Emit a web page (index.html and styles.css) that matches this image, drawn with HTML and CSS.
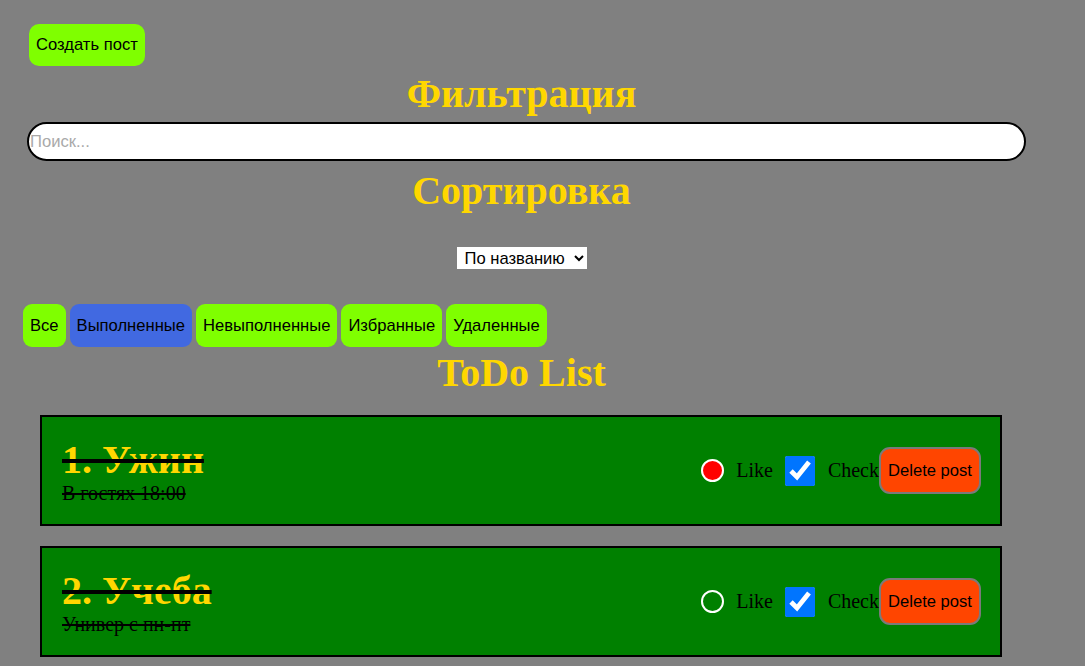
FILE: index.html
```html
<!DOCTYPE html>
<html lang="ru">
<head>
<meta charset="utf-8">
<title>ToDo</title>
<link rel="stylesheet" href="styles.css">
</head>
<body>
<div class="app">
  <button class="create">Создать пост</button>
  <h1 class="title">Фильтрация</h1>
  <input class="search" type="text" placeholder="Поиск...">
  <h1 class="title title-sort">Сортировка</h1>
  <div class="sort">
    <select class="sort-select">
      <option>По названию</option>
      <option>По описанию</option>
    </select>
  </div>
  <div class="filters">
    <button class="filter">Все</button>
    <button class="filter active">Выполненные</button>
    <button class="filter">Невыполненные</button>
    <button class="filter">Избранные</button>
    <button class="filter">Удаленные</button>
  </div>
  <h1 class="title title-list">ToDo List</h1>
  <div class="list">
    <div class="post">
      <div class="post-text">
        <h2 class="post-title">1. Ужин</h2>
        <div class="post-desc">В гостях 18:00</div>
      </div>
      <div class="post-actions">
        <input class="like" type="radio" checked>
        <span class="label like-label">Like</span>
        <input class="check" type="checkbox" checked>
        <span class="label check-label">Check</span>
        <button class="delete">Delete post</button>
      </div>
    </div>
    <div class="post">
      <div class="post-text">
        <h2 class="post-title">2. Учеба</h2>
        <div class="post-desc">Универ с пн-пт</div>
      </div>
      <div class="post-actions">
        <input class="like" type="radio">
        <span class="label like-label">Like</span>
        <input class="check" type="checkbox" checked>
        <span class="label check-label">Check</span>
        <button class="delete">Delete post</button>
      </div>
    </div>
  </div>
</div>
</body>
</html>
```
FILE: styles.css
```css
body {
  margin: 0;
  background: #808080;
  font-family: "Liberation Serif", "Times New Roman", serif;
}

.app {
  width: 1001px;
  margin-left: 21px;
  padding-top: 24px;
}

.create {
  display: block;
  margin-left: 8px;
  height: 42px;
  padding: 0 7px;
  border: none;
  border-radius: 10px;
  background: #7fff00;
  color: #000;
  font-family: "Liberation Sans", Arial, sans-serif;
  font-size: 16.6px;
}

.title {
  margin: 5px 0 0;
  text-align: center;
  color: #ffd700;
  font-family: "Liberation Serif", "Times New Roman", serif;
  font-weight: bold;
  font-size: 40px;
  line-height: 45px;
}

.search {
  display: block;
  box-sizing: border-box;
  margin: 6px 0 0 6px;
  width: 999px;
  height: 39px;
  padding: 0 1px;
  border: 2px solid #000;
  border-radius: 20px;
  background: #fff;
  font-family: "Liberation Sans", Arial, sans-serif;
  font-size: 16.6px;
  outline: none;
}

.search::placeholder {
  color: #a9a9a9;
}

.title-sort {
  margin-top: 7px;
}

.sort {
  margin-top: 34px;
  text-align: center;
  height: 22px;
}

.sort-select {
  box-sizing: border-box;
  width: 130px;
  height: 22px;
  padding: 0 0 0 4px;
  border: none;
  border-radius: 0;
  font-family: "Liberation Sans", Arial, sans-serif;
  font-size: 16.6px;
  background-color: #fff;
  color: #000;
}

.filters {
  display: flex;
  gap: 4px;
  margin-top: 35px;
  padding-left: 2px;
}

.filter {
  height: 43px;
  padding: 0 7px;
  border: none;
  border-radius: 9px;
  background: #7fff00;
  color: #000;
  font-family: "Liberation Sans", Arial, sans-serif;
  font-size: 16.6px;
}

.filter.active {
  background: #4169e1;
}

.title-list {
  margin-top: 3px;
}

.list {
  margin-top: 20px;
}

.post {
  box-sizing: border-box;
  width: 962px;
  margin: 0 0 20px 19px;
  padding: 20px 19px 20px 20px;
  border: 2px solid #000;
  background: #008000;
  display: flex;
  justify-content: space-between;
  align-items: center;
}

.post-title {
  margin: 0;
  color: #ffd700;
  font-size: 40px;
  line-height: 45px;
  font-weight: bold;
  text-decoration: line-through;
  text-decoration-color: #000;
  text-decoration-thickness: 4px;
}

.post-desc {
  color: #000;
  font-size: 20px;
  line-height: 22px;
  text-decoration: line-through;
  text-decoration-color: #000;
}

.post-actions {
  display: flex;
  align-items: center;
}

.like {
  appearance: none;
  -webkit-appearance: none;
  box-sizing: border-box;
  width: 23px;
  height: 23px;
  margin: 0;
  border: 2px solid #fff;
  border-radius: 50%;
  background: transparent;
}

.like:checked {
  background: #ff0000;
}

.label {
  font-size: 20px;
  color: #000;
}

.like-label {
  margin-left: 12px;
}

.check {
  width: 30px;
  height: 30px;
  margin: 0 0 0 12px;
}

.check-label {
  margin-left: 13px;
}

.delete {
  box-sizing: border-box;
  width: 102px;
  height: 47px;
  padding: 0;
  border: 2px solid #7a7a7a;
  border-radius: 11px;
  background: #ff4500;
  color: #000;
  font-family: "Liberation Sans", Arial, sans-serif;
  font-size: 16.6px;
}
```
